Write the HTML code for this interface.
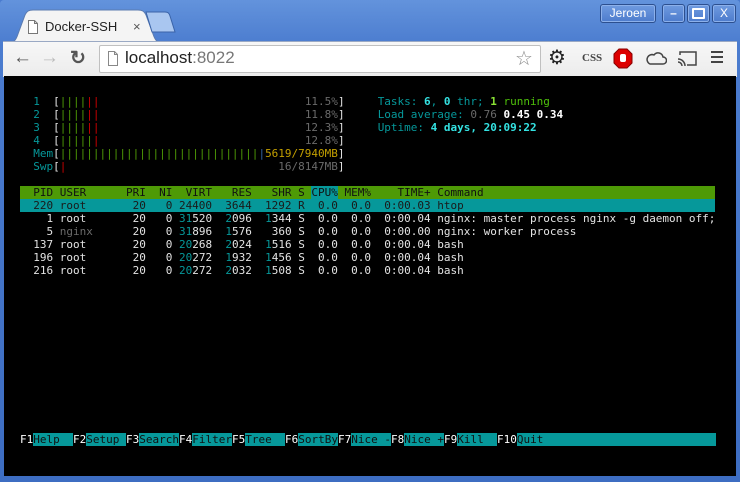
<!DOCTYPE html>
<html><head><meta charset="utf-8"><style>
body{margin:0;width:740px;height:482px;overflow:hidden;background:#4a7bcf;font-family:"Liberation Sans",sans-serif;position:relative}
.frame{position:absolute;left:0;top:0;width:740px;height:482px;background:linear-gradient(#6393dc,#4b7ccf 45px,#3d6dc2);border-radius:4px 4px 0 0}
.toolbar{position:absolute;left:3px;top:41px;width:734px;height:35px;background:linear-gradient(#f7f7f7,#ececec);border-top:1px solid #9aa9c4}
.term{position:absolute;left:4px;top:76px;width:732px;height:400px;background:#000}
.t{position:absolute;left:20px;font-family:"DejaVu Sans Mono","Liberation Mono",monospace;font-size:11px;line-height:13px;white-space:pre;color:#e3e3e3;margin:0}
.g{color:#4e9a06}.r{color:#cc0000}.c{color:#06989a}.gr{color:#6a6a6a}.o{color:#c4a000}.b{color:#3465a4}
.w{color:#fff;font-weight:bold}.cb{color:#34e2e2;font-weight:bold}.gb{color:#8ae234;font-weight:bold}
.hd{background:#4e9a06;color:#111}.hc{background:#06989a;color:#111}.sel{background:#06989a;color:#1a1a1a}
.fk{color:#fff}.fl{background:#06989a;color:#111}
.btn{position:absolute;top:4px;height:17px;border:1px solid #2c4f8f;border-radius:3px;background:linear-gradient(#6f9be0,#4d7bcc);color:#fff;font-size:12px;text-align:center;line-height:17px;box-shadow:inset 0 0 0 1px #8cb0ea}
</style></head><body>
<div class="frame"></div>
<svg style="position:absolute;left:0;top:0" width="260" height="44">
<path d="M8 43 C14 43 16 40 18 34 L25 15 C27 11 29 10 33 10 L138 10 C142 10 144 11 146 15 L153 34 C155 40 157 43 163 43 Z" fill="#f4f4f4" stroke="#5b7bb0"/>
<path d="M146 12 L165 12 C168 12 169 13 170 16 L175 32 L152 32 Z" fill="#a9c6f0" stroke="#3a63a8"/>
</svg>
<svg style="position:absolute;left:27px;top:20px" width="12" height="14"><path d="M1.5 .5 H7.5 L10.5 3.5 V13.5 H1.5 Z M7.5 .5 V3.5 H10.5" fill="#fff" stroke="#777"/></svg>
<div style="position:absolute;left:45px;top:19px;font-size:13px;color:#222">Docker-SSH</div>
<div style="position:absolute;left:133px;top:19px;font-size:13px;color:#555">×</div>
<div class="btn" style="left:600px;width:54px">Jeroen</div>
<div class="btn" style="left:662px;width:21px;font-weight:bold">–</div>
<div class="btn" style="left:687px;width:21px"><div style="width:9px;height:7px;border:2px solid #fff;border-radius:1px;margin:3px auto 0"></div></div>
<div class="btn" style="left:712px;width:22px">X</div>
<div class="toolbar"></div>
<div style="position:absolute;left:13px;top:47px;font-size:19px;color:#555;font-weight:bold">←</div>
<div style="position:absolute;left:40px;top:47px;font-size:19px;color:#bbb;font-weight:bold">→</div>
<div style="position:absolute;left:70px;top:47px;font-size:19px;color:#555;font-weight:bold">↻</div>
<div style="position:absolute;left:99px;top:45px;width:440px;height:26px;background:#fff;border:1px solid #c0c0c0;border-radius:2px"></div>
<svg style="position:absolute;left:107px;top:51px" width="12" height="15"><path d="M1.5 .5 H7.5 L10.5 3.5 V14.5 H1.5 Z M7.5 .5 V3.5 H10.5" fill="#fff" stroke="#888"/></svg>
<div style="position:absolute;left:125px;top:48px;font-size:17px;color:#222">localhost<span style="color:#777">:8022</span></div>
<div style="position:absolute;left:515px;top:46px;font-size:20px;color:#888">☆</div>
<div style="position:absolute;left:548px;top:45px;font-size:20px;color:#222">⚙</div>
<div style="position:absolute;left:582px;top:52px;font-size:11px;color:#444;font-weight:bold;font-family:'Liberation Serif',serif">CSS</div>
<svg style="position:absolute;left:613px;top:48px" width="20" height="21"><polygon points="6,1 14,1 19,6 19,15 14,20 6,20 1,15 1,6" fill="#d00" stroke="#800"/><rect x="7" y="6" width="6" height="8" rx="2" fill="#fff"/></svg>
<svg style="position:absolute;left:645px;top:50px" width="22" height="16"><path d="M5 14 H18 A3.5 3.5 0 0 0 18 7 A5 5 0 0 0 9 5 A4 4 0 0 0 5 14 Z" fill="none" stroke="#444" stroke-width="1.5"/></svg>
<svg style="position:absolute;left:676px;top:50px" width="22" height="18"><path d="M4 5 V2 H20 V15 H11" fill="none" stroke="#444" stroke-width="1.5"/><path d="M2 9 A7 7 0 0 1 9 16 M2 12 A4 4 0 0 1 6 16" fill="none" stroke="#444" stroke-width="1.5"/></svg>
<div style="position:absolute;left:711px;top:51px;width:12px"><div style="height:2px;background:#444;margin-bottom:3px"></div><div style="height:2px;background:#444;margin-bottom:3px"></div><div style="height:2px;background:#444"></div></div>
<div class="term"></div>
<pre class="t" style="top:95px"><span class="c">  1  </span>[<span class="g">||||</span><span class="r">||</span>                               <span class="gr">11.5%</span>]     <span class="c">Tasks: </span><span class="cb">6</span><span class="c">, </span><span class="cb">0</span><span class="c"> thr; </span><span class="gb">1</span><span class="g" style="color:#4ec00a"> running</span>
<span class="c">  2  </span>[<span class="g">||||</span><span class="r">||</span>                               <span class="gr">11.8%</span>]     <span class="c">Load average: </span><span class="gr">0.76 </span><span class="w">0.45 </span><span class="w">0.34</span>
<span class="c">  3  </span>[<span class="g">||||</span><span class="r">||</span>                               <span class="gr">12.3%</span>]     <span class="c">Uptime: </span><span class="cb">4 days, 20:09:22</span>
<span class="c">  4  </span>[<span class="g">|||||</span><span class="r">|</span>                               <span class="gr">12.8%</span>]
<span class="c">  Mem</span>[<span class="g">||||||||||||||||||||||||||||||</span><span class="b">|</span><span class="o">5619/7940MB</span>]
<span class="c">  Swp</span>[<span class="r">|</span>                                <span class="gr">16/8147MB</span>]

<span class="hd">  PID USER      PRI  NI  VIRT   RES   SHR S </span><span class="hc">CPU%</span><span class="hd"> MEM%    TIME+ Command                                   </span>
<span class="sel">  220 root       20   0 24400  3644  1292 R  0.0  0.0  0:00.03 htop                                      </span>
    1 root       20   0 <span class="c">31</span>520  <span class="c">2</span>096  <span class="c">1</span>344 S  0.0  0.0  0:00.04 nginx: master process nginx -g daemon off;
    5 <span class="gr">nginx</span>      20   0 <span class="c">31</span>896  <span class="c">1</span>576   360 S  0.0  0.0  0:00.00 nginx: worker process
  137 root       20   0 <span class="c">20</span>268  <span class="c">2</span>024  <span class="c">1</span>516 S  0.0  0.0  0:00.04 bash
  196 root       20   0 <span class="c">20</span>272  <span class="c">1</span>932  <span class="c">1</span>456 S  0.0  0.0  0:00.04 bash
  216 root       20   0 <span class="c">20</span>272  <span class="c">2</span>032  <span class="c">1</span>508 S  0.0  0.0  0:00.04 bash</pre>
<pre class="t" style="top:433px"><span class="fk">F1</span><span class="fl">Help  </span><span class="fk">F2</span><span class="fl">Setup </span><span class="fk">F3</span><span class="fl">Search</span><span class="fk">F4</span><span class="fl">Filter</span><span class="fk">F5</span><span class="fl">Tree  </span><span class="fk">F6</span><span class="fl">SortBy</span><span class="fk">F7</span><span class="fl">Nice -</span><span class="fk">F8</span><span class="fl">Nice +</span><span class="fk">F9</span><span class="fl">Kill  </span><span class="fk">F10</span><span class="fl">Quit                          </span></pre>
</body></html>
